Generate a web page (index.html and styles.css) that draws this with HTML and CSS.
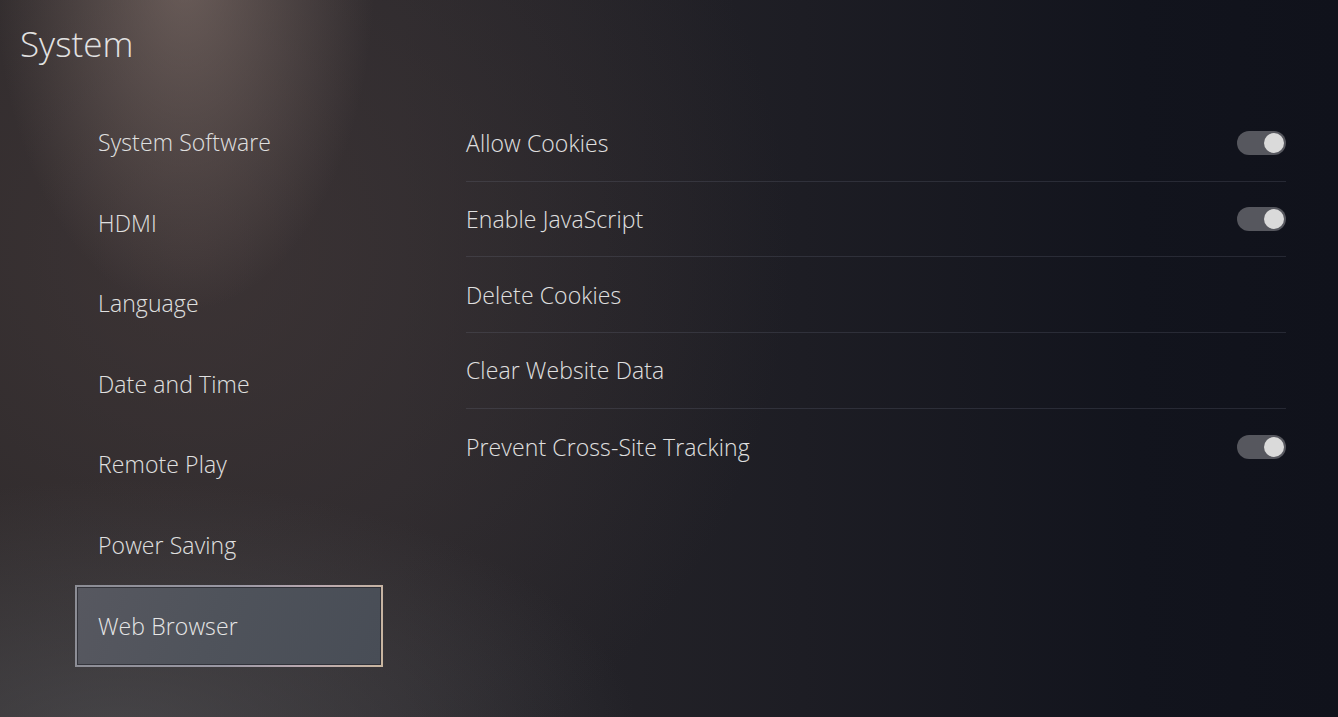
FILE: index.html
```html
<!DOCTYPE html>
<html lang="en">
<head>
<meta charset="utf-8">
<title>System</title>
<link rel="stylesheet" href="styles.css">
</head>
<body>
<div class="screen">
  <header class="header">
    <h1 class="title">System</h1>
  </header>
  <main class="main">
    <nav class="nav">
      <div class="nav-item">System Software</div>
      <div class="nav-item">HDMI</div>
      <div class="nav-item">Language</div>
      <div class="nav-item">Date and Time</div>
      <div class="nav-item">Remote Play</div>
      <div class="nav-item">Power Saving</div>
      <div class="nav-item selected">Web Browser</div>
    </nav>
    <section class="panel">
      <div class="row"><span class="label">Allow Cookies</span><span class="toggle on"><span class="knob"></span></span></div>
      <div class="row"><span class="label">Enable JavaScript</span><span class="toggle on"><span class="knob"></span></span></div>
      <div class="row"><span class="label">Delete Cookies</span></div>
      <div class="row"><span class="label">Clear Website Data</span></div>
      <div class="row last"><span class="label">Prevent Cross-Site Tracking</span><span class="toggle on"><span class="knob"></span></span></div>
    </section>
  </main>
</div>
</body>
</html>
```

FILE: styles.css
```css
* { box-sizing: border-box; }
html, body { margin: 0; padding: 0; }
body {
  width: 1338px;
  height: 717px;
  overflow: hidden;
  font-family: "Open Sans", "Noto Sans", sans-serif;
  font-weight: 300;
  color: #dedede;
  background:
    radial-gradient(ellipse 190px 340px at 185px -30px, rgba(150,130,122,0.55), rgba(150,130,122,0) 100%),
    radial-gradient(ellipse 520px 260px at 120px 740px, rgba(95,96,100,0.5), rgba(95,96,100,0) 100%),
    radial-gradient(ellipse 600px 600px at 190px 250px, rgba(72,60,60,0.6), rgba(72,60,60,0) 100%),
    linear-gradient(90deg, #2a2729 0%, #29272b 30%, #1d1d24 60%, #12141d 85%, #10121b 100%);
}
.screen {
  height: 717px;
  display: flex;
  flex-direction: column;
}
.header {
  height: 102px;
  padding: 22px 0 0 20px;
}
.title {
  margin: 0;
  font-weight: 300;
  font-size: 35px;
  line-height: 44px;
  color: #e2e2e2;
}
.main {
  display: flex;
  gap: 83px;
  padding-left: 75px;
}
.nav {
  width: 308px;
  display: flex;
  flex-direction: column;
}
.nav-item {
  height: 80.5px;
  padding-left: 23px;
  display: flex;
  align-items: center;
  font-size: 23px;
  letter-spacing: 0.1px;
  color: #e0e0e0;
}
.nav-item.selected {
  height: 82px;
  border: 2px solid #8d8e96;
  border-image: linear-gradient(100deg, #8c8d95 0%, #9a98a4 50%, #b9a8b0 75%, #c9b6a0 100%) 1;
  background: linear-gradient(110deg, #575860 0%, #4f535b 45%, #484d56 100%);
  box-shadow: inset 0 0 0 1px rgba(30,30,36,0.6);
  padding-left: 21px;
  color: #e6e6e6;
}
.panel {
  width: 820px;
  margin-top: 4px;
  display: flex;
  flex-direction: column;
}
.row {
  height: 75.7px;
  display: flex;
  align-items: center;
  justify-content: space-between;
  border-bottom: 1px solid rgba(120,122,140,0.22);
}
.row.last { border-bottom: none; }
.label {
  font-size: 23px;
  letter-spacing: 0.1px;
  color: #e0e0e0;
}
.toggle {
  width: 49px;
  height: 24px;
  border-radius: 12px;
  background: #56575e;
  display: flex;
  align-items: center;
  justify-content: flex-end;
  padding-right: 2px;
}
.knob {
  width: 20px;
  height: 20px;
  border-radius: 50%;
  background: #dadada;
}
```
